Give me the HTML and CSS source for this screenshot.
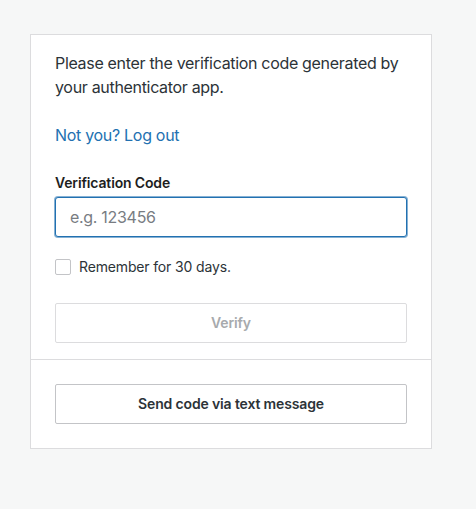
FILE: index.html
```html
<!DOCTYPE html>
<html lang="en">
<head>
<meta charset="utf-8">
<title>Verification</title>
<link rel="stylesheet" href="styles.css">
</head>
<body>
<div class="card">
  <div class="section top">
    <p class="intro">Please enter the verification code generated by your authenticator app.</p>
    <a class="logout" href="#">Not you? Log out</a>
    <label class="field-label" for="code">Verification Code</label>
    <input class="code-input" id="code" type="text" placeholder="e.g. 123456">
    <label class="remember">
      <span class="checkbox"></span>
      <span>Remember for 30 days.</span>
    </label>
    <button class="btn btn-disabled" type="button">Verify</button>
  </div>
  <div class="section bottom">
    <button class="btn btn-secondary" type="button">Send code via text message</button>
  </div>
</div>
</body>
</html>
```

FILE: styles.css
```css
* { box-sizing: border-box; }
html, body {
  margin: 0;
  padding: 0;
  background: #f6f7f7;
  font-family: Inter, "Noto Sans", "Liberation Sans", sans-serif;
  color: #2c3338;
  height: 100%;
}
.card {
  margin: 34px 0 0 30px;
  width: 402px;
  background: #fff;
  border: 1px solid #dcdcde;
}
.section {
  display: flex;
  flex-direction: column;
  padding: 16px 24px 16px;
}
.section.bottom {
  border-top: 1px solid #dcdcde;
  padding: 24px 24px 24px;
}
.intro {
  margin: 0;
  font-size: 16px;
  line-height: 24px;
  letter-spacing: -0.32px;
}
.logout {
  margin-top: 24px;
  font-size: 16px;
  line-height: 24px;
  letter-spacing: -0.3px;
  color: #2271b1;
  text-decoration: none;
  align-self: flex-start;
}
.field-label {
  margin-top: 25px;
  font-size: 14px;
  line-height: 21px;
  font-weight: 600;
  letter-spacing: -0.15px;
  color: #1e1e1e;
}
.code-input {
  margin-top: 4px;
  height: 40px;
  width: 100%;
  border: 1px solid #2271b1;
  box-shadow: 0 0 0 1px rgba(34, 113, 177, 0.55);
  border-radius: 3px;
  padding: 0 14px;
  font-family: inherit;
  font-size: 16px;
  letter-spacing: -0.3px;
  color: #2c3338;
  outline: none;
}
.code-input::placeholder { color: #787c82; }
.remember {
  margin-top: 22px;
  display: flex;
  align-items: center;
  gap: 8px;
  font-size: 14px;
  line-height: 16px;
  letter-spacing: -0.15px;
  color: #2c3338;
}
.checkbox {
  width: 16px;
  height: 16px;
  border: 1px solid #c3c4c7;
  border-radius: 2px;
  background: #fff;
}
.btn {
  height: 40px;
  width: 100%;
  background: #fff;
  border-radius: 2px;
  font-family: inherit;
  font-size: 14px;
  font-weight: 600;
  letter-spacing: -0.15px;
  padding: 0 0 2px;
}
.btn-disabled {
  margin-top: 28px;
  border: 1px solid #dcdcde;
  color: #a7aaad;
}
.btn-secondary {
  border: 1px solid #c3c4c7;
  color: #2c3338;
}
```
